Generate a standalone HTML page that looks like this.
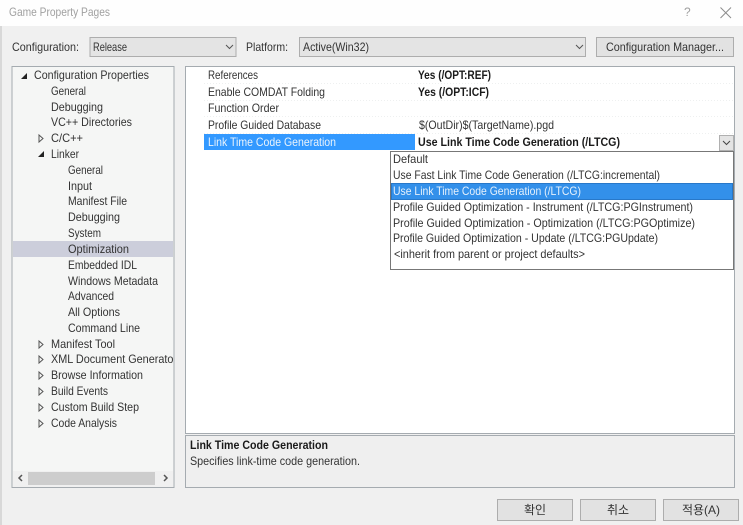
<!DOCTYPE html>
<html><head><meta charset="utf-8"><style>
html,body{margin:0;padding:0;background:#f0f0f0}
svg{display:block;filter:blur(.3px)}
text{font-family:"Liberation Sans","Noto Sans CJK KR",sans-serif;font-size:12px;fill:#333}
.b{font-weight:bold;fill:#1a1a1a}
.k{font-size:12px}
</style></head><body>
<svg width="743" height="525" viewBox="0 0 743 525" xmlns="http://www.w3.org/2000/svg">
<defs><clipPath id="tc"><rect x="13" y="67" width="160" height="405"/></clipPath></defs>
<rect width="743" height="525" fill="#f0f0f0"/>
<rect width="743" height="26" fill="#fefefe"/>
<rect x="0" y="26" width="2" height="499" fill="#d8d8d8"/>
<text x="9" y="16" textLength="101" lengthAdjust="spacingAndGlyphs" style="fill:#a0a0a0">Game Property Pages</text>
<text x="684" y="16" style="fill:#a0a0a0">?</text>
<path d="M720.500 7.500L731 18M731 7.500L720.500 18" stroke="#8c8c8c" fill="none"/>

<text x="12" y="51" textLength="67" lengthAdjust="spacingAndGlyphs">Configuration:</text>
<rect x="90" y="37.500" width="146" height="19" fill="#e4e4e4" stroke="#adadad"/>
<text x="93" y="51" textLength="34" lengthAdjust="spacingAndGlyphs">Release</text>
<path d="M226 45l3.500 3.500L233 45" stroke="#555" fill="none"/>
<text x="246" y="51" textLength="42" lengthAdjust="spacingAndGlyphs">Platform:</text>
<rect x="299.500" y="37.500" width="286" height="19" fill="#e4e4e4" stroke="#adadad"/>
<text x="303" y="51" textLength="66" lengthAdjust="spacingAndGlyphs">Active(Win32)</text>
<path d="M576 45l3.500 3.500L583 45" stroke="#555" fill="none"/>
<rect x="596.500" y="37.500" width="137" height="19" fill="#e2e2e2" stroke="#adadad"/>
<text x="606" y="51" textLength="118" lengthAdjust="spacingAndGlyphs">Configuration Manager...</text>

<!-- tree -->
<rect x="12" y="66.500" width="162" height="421" fill="#f5f6f5" stroke="#a5abb0"/>
<rect x="13" y="241" width="160" height="16" fill="#cccedb"/>
<g clip-path="url(#tc)">
<text x="34" y="79" textLength="115" lengthAdjust="spacingAndGlyphs">Configuration Properties</text>
<text x="51" y="95" textLength="35" lengthAdjust="spacingAndGlyphs">General</text>
<text x="51" y="111" textLength="52" lengthAdjust="spacingAndGlyphs">Debugging</text>
<text x="51" y="126" textLength="81" lengthAdjust="spacingAndGlyphs">VC++ Directories</text>
<text x="51" y="142" textLength="32" lengthAdjust="spacingAndGlyphs">C/C++</text>
<text x="51" y="158" textLength="28" lengthAdjust="spacingAndGlyphs">Linker</text>
<text x="68" y="174" textLength="35" lengthAdjust="spacingAndGlyphs">General</text>
<text x="68" y="190" textLength="24" lengthAdjust="spacingAndGlyphs">Input</text>
<text x="68" y="205" textLength="59" lengthAdjust="spacingAndGlyphs">Manifest File</text>
<text x="68" y="221" textLength="52" lengthAdjust="spacingAndGlyphs">Debugging</text>
<text x="68" y="237" textLength="33" lengthAdjust="spacingAndGlyphs">System</text>
<text x="68" y="253" textLength="61" lengthAdjust="spacingAndGlyphs">Optimization</text>
<text x="68" y="269" textLength="69" lengthAdjust="spacingAndGlyphs">Embedded IDL</text>
<text x="68" y="285" textLength="90" lengthAdjust="spacingAndGlyphs">Windows Metadata</text>
<text x="68" y="300" textLength="46" lengthAdjust="spacingAndGlyphs">Advanced</text>
<text x="68" y="316" textLength="52" lengthAdjust="spacingAndGlyphs">All Options</text>
<text x="68" y="332" textLength="72" lengthAdjust="spacingAndGlyphs">Command Line</text>
<text x="51" y="348" textLength="64" lengthAdjust="spacingAndGlyphs">Manifest Tool</text>
<text x="51" y="363" textLength="126" lengthAdjust="spacingAndGlyphs">XML Document Generator</text>
<text x="51" y="379" textLength="92" lengthAdjust="spacingAndGlyphs">Browse Information</text>
<text x="51" y="395" textLength="57" lengthAdjust="spacingAndGlyphs">Build Events</text>
<text x="51" y="411" textLength="88" lengthAdjust="spacingAndGlyphs">Custom Build Step</text>
<text x="51" y="427" textLength="66" lengthAdjust="spacingAndGlyphs">Code Analysis</text>
</g>
<path d="M21 79h6v-6z" fill="#222"/>
<path d="M38 157h6v-6z" fill="#222"/>
<g fill="#f5f6f5" stroke="#555">
<path d="M39 135l4 3.500-4 3.500z"/>
<path d="M39 341l4 3.500-4 3.500z"/>
<path d="M39 356l4 3.500-4 3.500z"/>
<path d="M39 372l4 3.500-4 3.500z"/>
<path d="M39 388l4 3.500-4 3.500z"/>
<path d="M39 404l4 3.500-4 3.500z"/>
<path d="M39 420l4 3.500-4 3.500z"/>
</g>
<rect x="13" y="471" width="160" height="16" fill="#f0f0f0"/>
<rect x="28" y="472" width="127" height="13" fill="#cdcdcd"/>
<path d="M22 475l-3 3 3 3M164 475l3 3-3 3" stroke="#555" stroke-width="1.500" fill="none"/>

<!-- grid -->
<rect x="185.500" y="66.500" width="549" height="367" fill="#fff" stroke="#a5abb0"/>
<g stroke="#eef0f0" stroke-dasharray="1 2">
<path d="M204 83.500h530M204 100.500h530M204 116.500h530M204 133.500h530"/>
</g>
<rect x="204" y="134" width="211" height="16" fill="#3399ff"/>
<text x="208" y="79" textLength="50" lengthAdjust="spacingAndGlyphs">References</text>
<text x="208" y="96" textLength="117" lengthAdjust="spacingAndGlyphs">Enable COMDAT Folding</text>
<text x="208" y="112" textLength="71" lengthAdjust="spacingAndGlyphs">Function Order</text>
<text x="208" y="129" textLength="113" lengthAdjust="spacingAndGlyphs">Profile Guided Database</text>
<text x="208" y="146" textLength="128" lengthAdjust="spacingAndGlyphs" style="fill:#eaf3fc">Link Time Code Generation</text>
<text class="b" x="418" y="79" textLength="73" lengthAdjust="spacingAndGlyphs">Yes (/OPT:REF)</text>
<text class="b" x="418" y="96" textLength="71" lengthAdjust="spacingAndGlyphs">Yes (/OPT:ICF)</text>
<text x="419" y="129" textLength="135" lengthAdjust="spacingAndGlyphs">$(OutDir)$(TargetName).pgd</text>
<text class="b" x="418" y="146" textLength="202" lengthAdjust="spacingAndGlyphs">Use Link Time Code Generation (/LTCG)</text>
<rect x="719.500" y="135.500" width="14" height="15" fill="#e4e4e4" stroke="#b0b0b0"/>
<path d="M723 141l3.500 3.500L730 141" stroke="#444" fill="none"/>

<!-- dropdown -->
<rect x="390.500" y="151.500" width="343" height="118" fill="#fff" stroke="#777"/>
<rect x="391" y="183" width="342" height="17" fill="#3390ea"/>
<path d="M391.500 183.500h341v16h-341z" fill="none" stroke="#1c5fa8" stroke-dasharray="1 1"/>
<text x="393" y="163" textLength="35" lengthAdjust="spacingAndGlyphs">Default</text>
<text x="393" y="179" textLength="267" lengthAdjust="spacingAndGlyphs">Use Fast Link Time Code Generation (/LTCG:incremental)</text>
<text x="393" y="195" textLength="188" lengthAdjust="spacingAndGlyphs" style="fill:#e6f1fc">Use Link Time Code Generation (/LTCG)</text>
<text x="393" y="211" textLength="300" lengthAdjust="spacingAndGlyphs">Profile Guided Optimization - Instrument (/LTCG:PGInstrument)</text>
<text x="393" y="227" textLength="302" lengthAdjust="spacingAndGlyphs">Profile Guided Optimization - Optimization (/LTCG:PGOptimize)</text>
<text x="393" y="242" textLength="265" lengthAdjust="spacingAndGlyphs">Profile Guided Optimization - Update (/LTCG:PGUpdate)</text>
<text x="394" y="258" textLength="191" lengthAdjust="spacingAndGlyphs">&lt;inherit from parent or project defaults&gt;</text>

<!-- description -->
<rect x="185.500" y="435.500" width="549" height="52" fill="#efefef" stroke="#a5abb0"/>
<text class="b" x="190" y="449" textLength="138" lengthAdjust="spacingAndGlyphs">Link Time Code Generation</text>
<text x="190" y="465" textLength="170" lengthAdjust="spacingAndGlyphs">Specifies link-time code generation.</text>

<!-- buttons -->
<rect x="497.500" y="499.500" width="75" height="21" fill="#e2e2e2" stroke="#adadad"/>
<rect x="580.500" y="499.500" width="75" height="21" fill="#e2e2e2" stroke="#adadad"/>
<rect x="663.500" y="499.500" width="75" height="21" fill="#e2e2e2" stroke="#adadad"/>
<text class="k" x="535" y="514" text-anchor="middle">확인</text>
<text class="k" x="618" y="514" text-anchor="middle">취소</text>
<text class="k" x="701" y="514" text-anchor="middle">적용(A)</text>
</svg>
</body></html>
